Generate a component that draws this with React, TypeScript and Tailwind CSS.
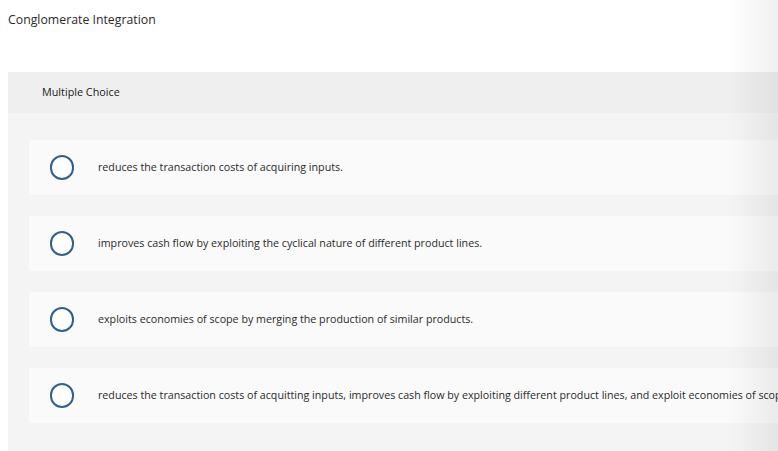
import React from 'react'

const OPTIONS = [
  'reduces the transaction costs of acquiring inputs.',
  'improves cash flow by exploiting the cyclical nature of different product lines.',
  'exploits economies of scope by merging the production of similar products.',
  'reduces the transaction costs of acquitting inputs, improves cash flow by exploiting different product lines, and exploit economies of scope by merging the production of similar products.',
]

const font = "font-['Open_Sans','Roboto',sans-serif]"

export default function App() {
  return (
    <div className={`relative w-[778px] h-[451px] overflow-hidden bg-white ${font} text-[#333]`}>
      <div className="h-[72px] pl-2 pt-[12px] text-[12.3px] leading-[16px] text-[#2b2b2b]">
        Conglomerate Integration
      </div>

      <div className="ml-2 w-[800px] bg-[#f4f4f4] pb-10">
        <div className="h-[41px] bg-[#efefef] pl-[34px] flex items-center text-[10.8px] text-[#222]">
          Multiple Choice
        </div>
        <div className="flex flex-col gap-[21px] pl-[21px] pt-[27px]">
          {OPTIONS.map(o => (
            <div key={o} className="h-[55px] bg-[#fafafa] flex items-center">
              <div className="ml-[21px] w-6 h-[25px] shrink-0 rounded-full border-2 border-[#2f5f8f] bg-white" />
              <div className="ml-6 whitespace-nowrap text-[10.7px] text-[#2a2a2a]">{o}</div>
            </div>
          ))}
        </div>
      </div>

      <div className="pointer-events-none absolute top-0 right-0 h-full w-[50px] bg-gradient-to-r from-transparent to-black/[0.06]" />
    </div>
  )
}
